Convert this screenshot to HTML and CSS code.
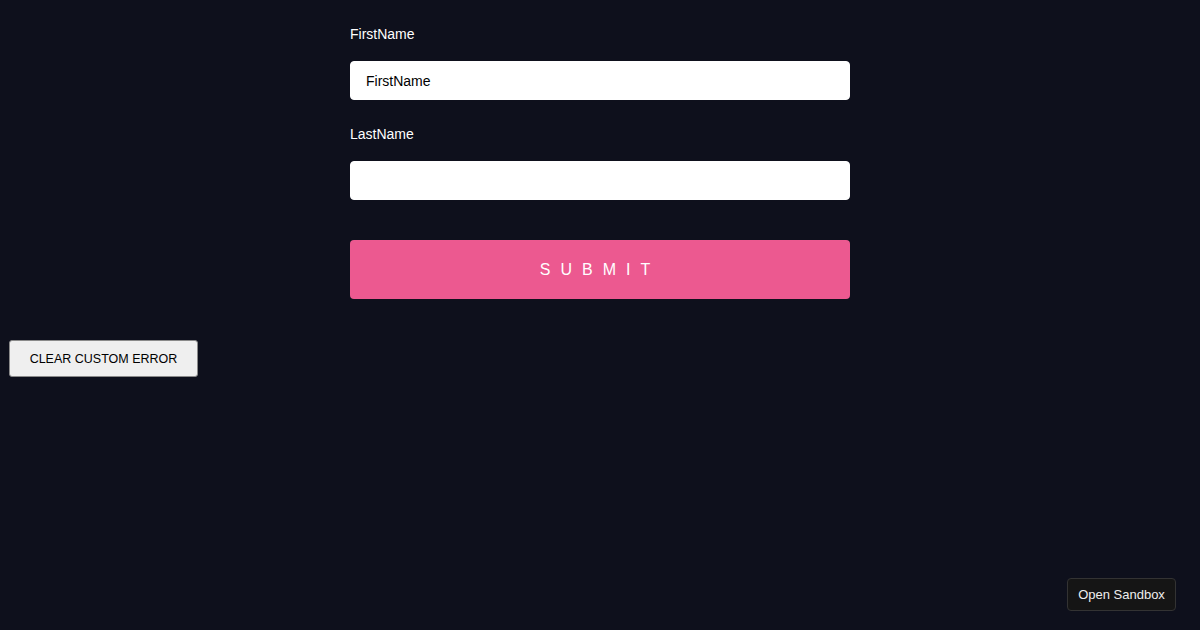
FILE: index.html
```html
<!DOCTYPE html>
<html>
<head>
<meta charset="utf-8">
<link rel="stylesheet" href="styles.css">
</head>
<body>
<form class="form">
  <label class="label">FirstName</label>
  <input class="input" type="text" value="FirstName">
  <label class="label">LastName</label>
  <input class="input" type="text">
  <button class="submit" type="button">Submit</button>
</form>
<button class="clear" type="button">CLEAR CUSTOM ERROR</button>
<a class="sandbox">Open Sandbox</a>
</body>
</html>
```
FILE: styles.css
```css
html, body {
  margin: 0;
  padding: 0;
  background: #0e101c;
  font-family: "Liberation Sans", Arial, sans-serif;
  height: 100%;
}
.form {
  width: 500px;
  margin: 0 auto;
  padding-top: 20px;
}
.label {
  display: block;
  color: #fff;
  font-size: 14px;
  line-height: 28px;
  margin: 0 0 13px 0;
}
.input + .label {
  margin-top: 20px;
}
.input {
  display: block;
  box-sizing: border-box;
  width: 100%;
  height: 39px;
  border: 1px solid #fff;
  border-radius: 4px;
  padding: 10px 15px;
  font-family: "Liberation Sans", Arial, sans-serif;
  font-size: 14px;
  color: #000;
  background: #fff;
  outline: none;
  margin: 0;
}
.submit {
  display: block;
  width: 100%;
  height: 59px;
  margin-top: 40px;
  border: none;
  border-radius: 4px;
  background: #ec5990;
  color: #fff;
  font-family: "Liberation Sans", Arial, sans-serif;
  font-size: 16px;
  font-weight: 100;
  text-transform: uppercase;
  letter-spacing: 10px;
  padding: 0;
}
.clear {
  display: block;
  margin: 41px 0 0 9px;
  box-sizing: border-box;
  width: 189px;
  height: 37px;
  background: #efefef;
  border: 1px solid #8a8a8a;
  border-radius: 3px;
  color: #000;
  font-family: "Liberation Sans", Arial, sans-serif;
  font-size: 12.5px;
  padding: 0;
}
.sandbox {
  position: fixed;
  right: 24px;
  bottom: 19px;
  box-sizing: border-box;
  width: 109px;
  height: 33px;
  display: flex;
  align-items: center;
  justify-content: center;
  background: #151515;
  border: 1px solid #333;
  border-radius: 4px;
  color: #eee;
  font-size: 13px;
}
```
